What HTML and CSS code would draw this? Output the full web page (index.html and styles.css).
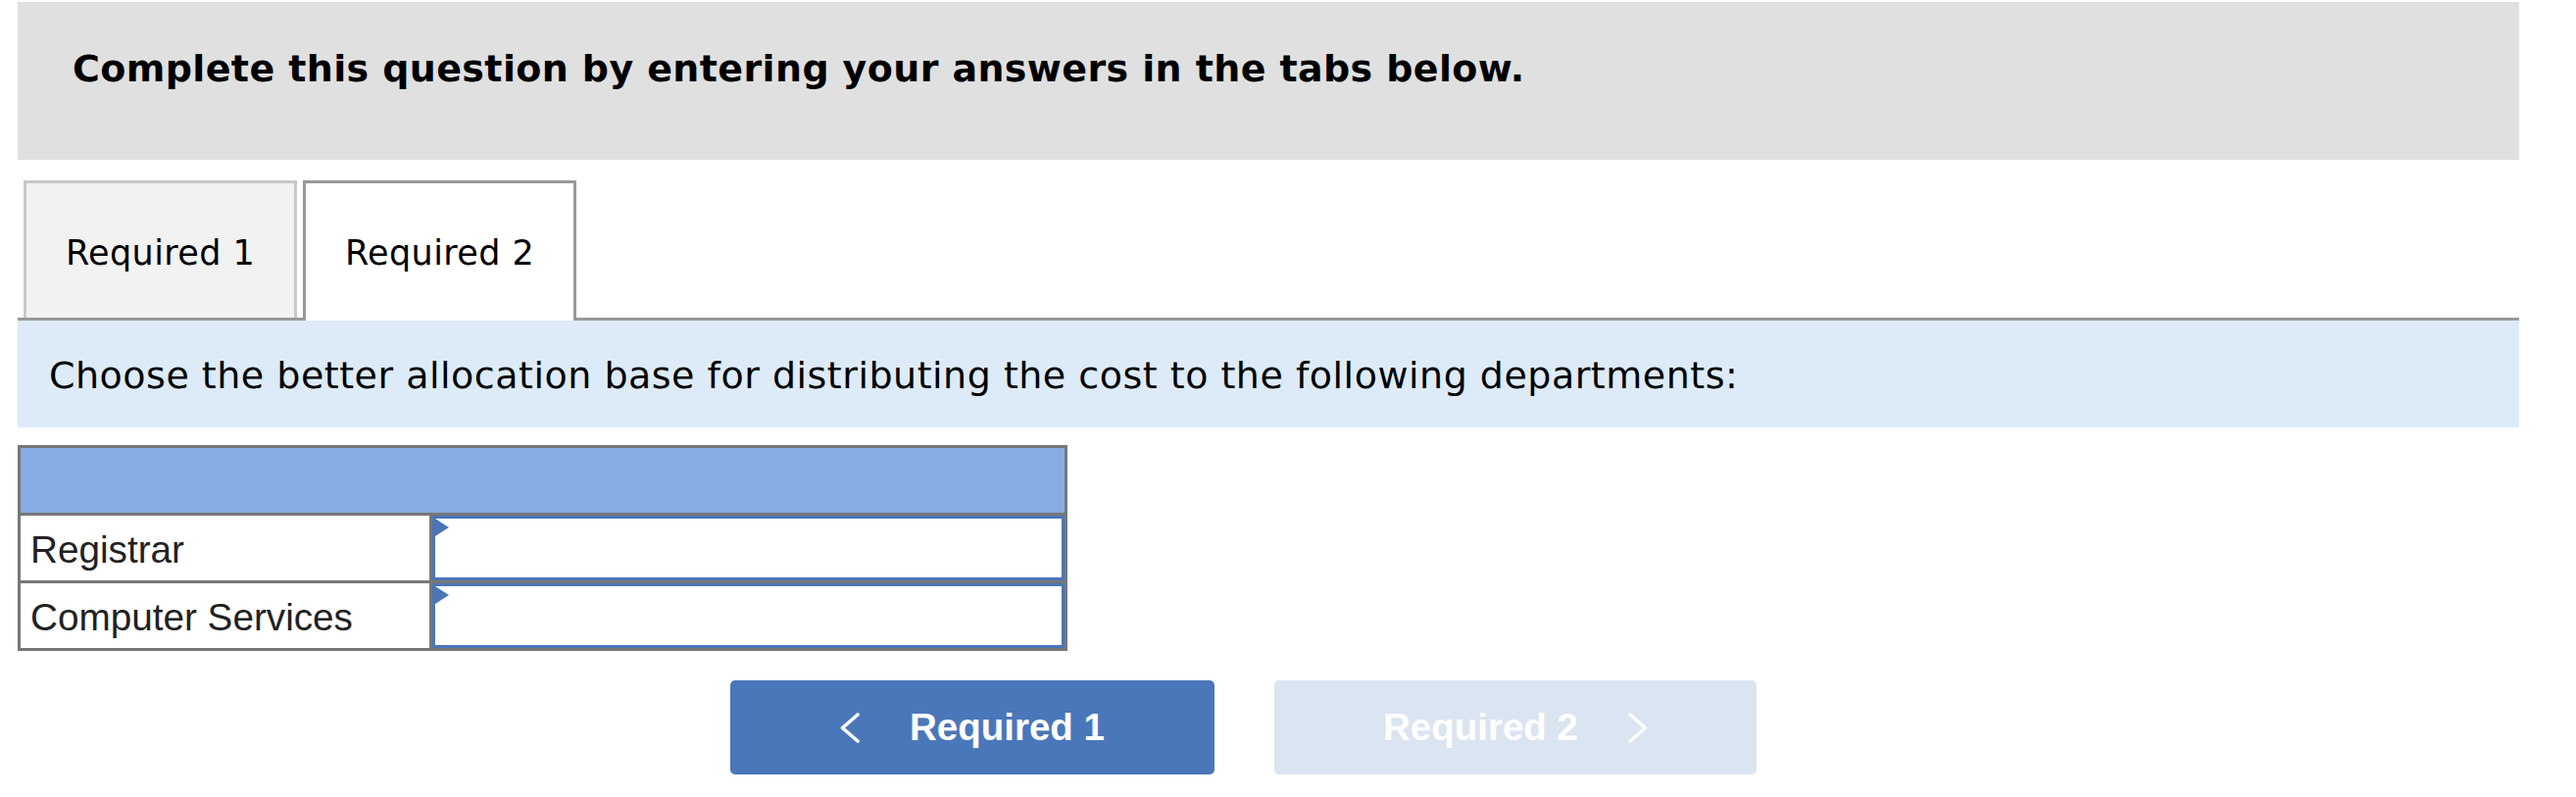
FILE: index.html
```html
<!DOCTYPE html>
<html lang="en">
<head>
<meta charset="utf-8">
<title>Complete this question</title>
<link rel="stylesheet" href="styles.css">
</head>
<body>
<div class="page">
  <div class="banner">Complete this question by entering your answers in the tabs below.</div>

  <div class="tabs">
    <div class="tab">Required 1</div>
    <div class="tab tab-active">Required 2</div>
  </div>

  <div class="prompt">Choose the better allocation base for distributing the cost to the following departments:</div>

  <div class="grid">
    <div class="grid-head"></div>
    <div class="label">Registrar</div>
    <div class="cell"><div class="input"><span class="marker"></span></div></div>
    <div class="label">Computer Services</div>
    <div class="cell"><div class="input"><span class="marker"></span></div></div>
  </div>

  <div class="nav">
    <div class="btn btn-prev">
      <svg class="chev" viewBox="0 0 20 31" width="20" height="31"><polyline points="18,2 2.5,15.5 18,29" fill="none" stroke="#fff" stroke-width="3.6" stroke-linecap="round" stroke-linejoin="round"/></svg>
      <span>Required 1</span>
    </div>
    <div class="btn btn-next">
      <span>Required 2</span>
      <svg class="chev" viewBox="0 0 20 31" width="20" height="31"><polyline points="2,2 17.5,15.5 2,29" fill="none" stroke="#fff" stroke-width="3.6" stroke-linecap="round" stroke-linejoin="round"/></svg>
    </div>
  </div>
</div>
</body>
</html>
```

FILE: styles.css
```css
html, body {
  margin: 0;
  padding: 0;
  background: #ffffff;
}

.page {
  padding: 2px 58px 0 18px;
  font-family: "DejaVu Sans", Verdana, sans-serif;
  color: #000;
}

.banner {
  box-sizing: border-box;
  height: 161px;
  background: #e0e0e0;
  padding: 46px 0 0 56px;
  font-weight: bold;
  font-size: 38px;
  line-height: 44px;
  letter-spacing: 0.38px;
}

.tabs {
  display: flex;
  gap: 6px;
  margin-top: 21px;
  padding-left: 6px;
  border-bottom: 3px solid #999999;
}

.tab {
  box-sizing: border-box;
  width: 279px;
  height: 140px;
  display: flex;
  align-items: center;
  justify-content: center;
  padding-top: 5px;
  font-size: 35px;
  letter-spacing: 0.4px;
  background: #f2f2f2;
  border: 3px solid #c8c8c8;
  border-bottom: none;
}

.tab-active {
  background: #ffffff;
  border-color: #999999;
  height: 143px;
  margin-bottom: -3px;
  padding-top: 2px;
}

.prompt {
  box-sizing: border-box;
  height: 109px;
  background: #ddebf8;
  padding: 34px 0 0 32px;
  font-size: 38px;
  line-height: 44px;
  letter-spacing: 0.5px;
}

.grid {
  display: grid;
  grid-template-columns: 417px 645px;
  grid-auto-rows: 66px;
  gap: 3px;
  width: max-content;
  margin-top: 18px;
  border: 3px solid #777777;
  background: #777777;
  font-family: "Liberation Sans", Arial, sans-serif;
}

.grid-head {
  grid-column: 1 / 3;
  background: #86ace2;
}

.label {
  display: flex;
  align-items: center;
  padding: 3px 0 0 10px;
  background: #ffffff;
  font-size: 38.7px;
  color: #222222;
}

.cell {
  background: #ffffff;
  display: flex;
}

.input {
  position: relative;
  flex: 1;
  border: 3px solid #4a76b8;
  background: #ffffff;
}

.marker {
  position: absolute;
  top: 0;
  left: 0;
  width: 0;
  height: 0;
  border-left: 14px solid #4a76b8;
  border-top: 9.5px solid transparent;
  border-bottom: 9.5px solid transparent;
}

.nav {
  display: flex;
  gap: 61px;
  margin-top: 30px;
  padding-left: 727px;
}

.btn {
  box-sizing: border-box;
  width: 494px;
  height: 96px;
  border-radius: 5px;
  display: flex;
  align-items: center;
  justify-content: center;
  gap: 51px;
  font-family: "Liberation Sans", Arial, sans-serif;
  font-weight: bold;
  font-size: 38.5px;
  color: #ffffff;
}

.btn-prev {
  background: #4a77b9;
}

.btn-next {
  background: #dbe4f1;
  width: 492px;
}

.chev {
  display: block;
  flex: none;
}
```
